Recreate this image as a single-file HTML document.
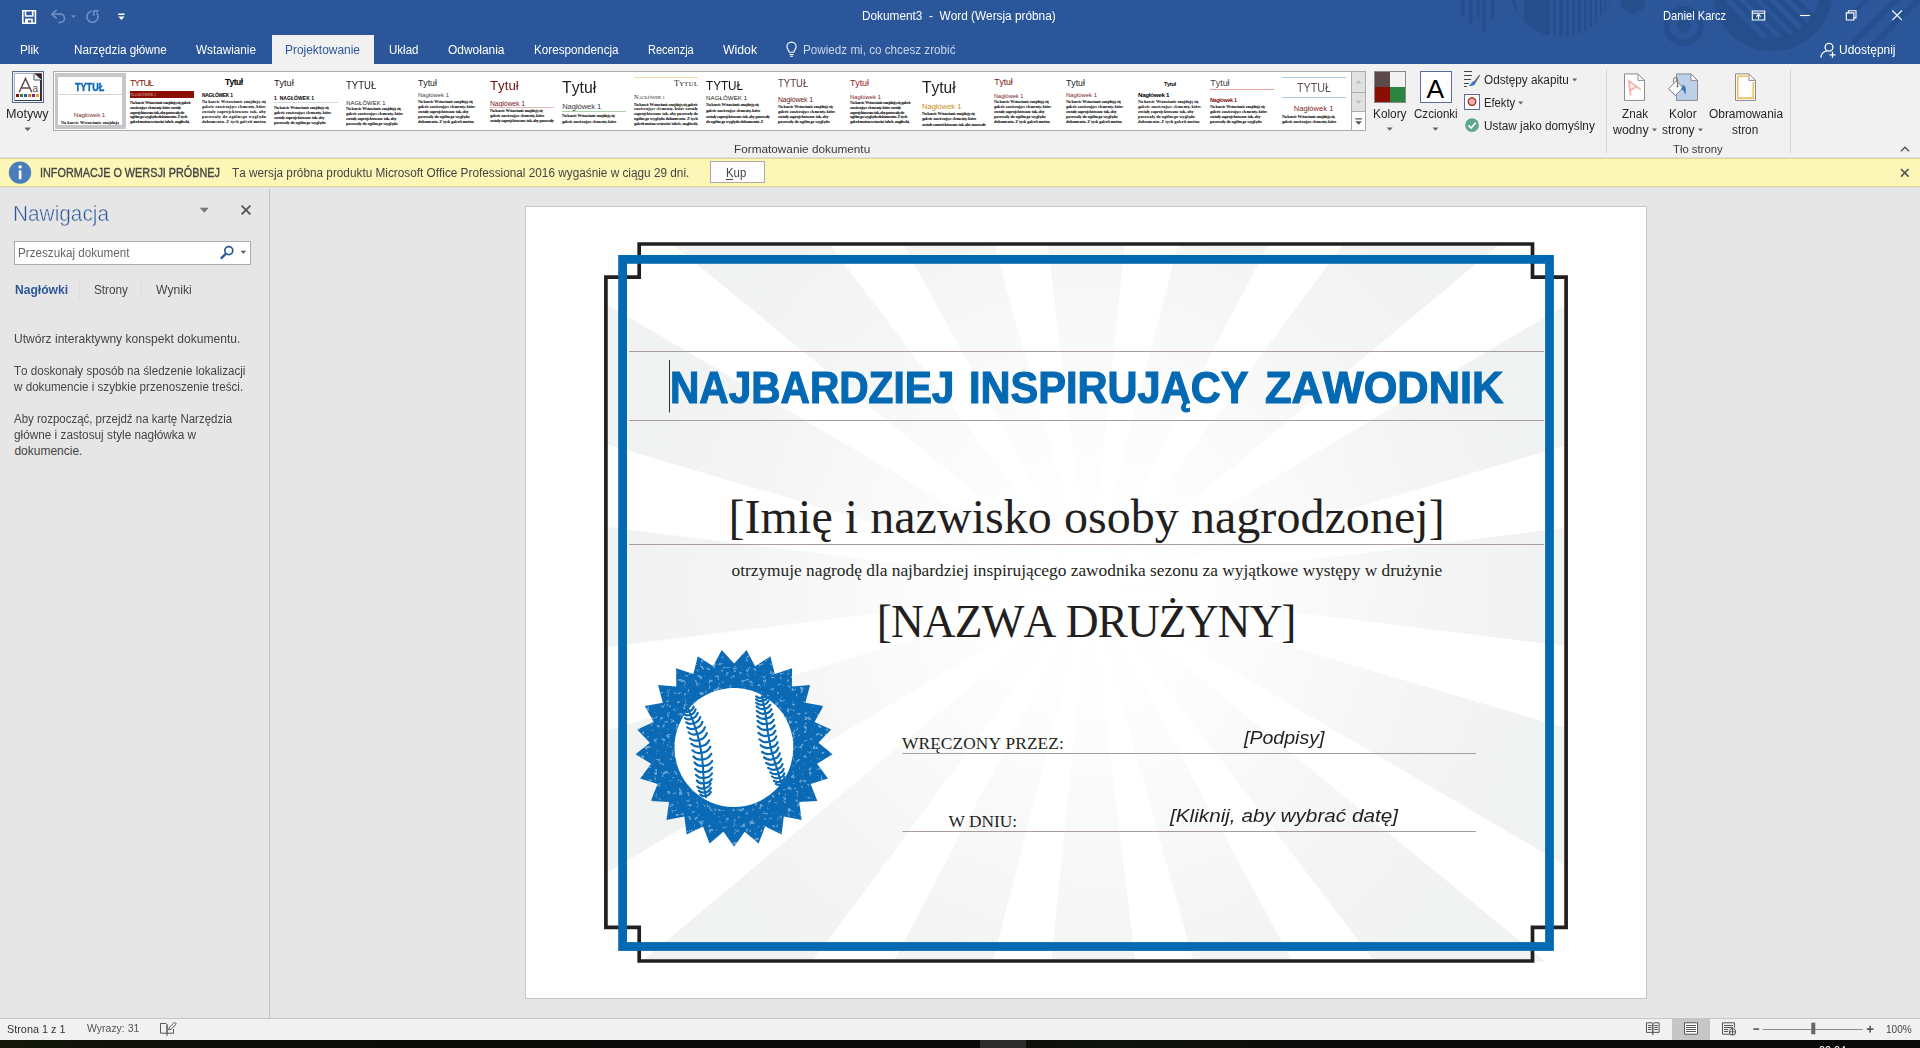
<!DOCTYPE html>
<html lang="pl"><head><meta charset="utf-8"><title>Dokument3 - Word</title>
<style>
html,body{margin:0;padding:0}
body{width:1920px;height:1048px;position:relative;overflow:hidden;background:#e6e6e6;font-family:"Liberation Sans",sans-serif;font-size:12px;color:#262626;font-kerning:none}
.t{position:absolute;white-space:pre;line-height:1;transform-origin:0 0}
.a{position:absolute}
svg{position:absolute;overflow:visible}
</style></head>
<body>
<header id="titlebar">
<div class="a" style="left:0px;top:0px;width:1920px;height:64px;background:#2b579a;"></div>
<svg style="left:1440px;top:0" width="480" height="64" viewBox="1440 0 480 64"><defs><clipPath id="tb"><rect x="1440" y="0" width="480" height="64"/></clipPath><clipPath id="c1"><circle cx="1561" cy="-14" r="51"/></clipPath><clipPath id="c2"><circle cx="1772.500" cy="-9" r="47"/></clipPath></defs><g clip-path="url(#tb)"><g fill="#254e8d">
<rect x="1461" y="0" width="4" height="16"/><rect x="1469" y="0" width="3.500" height="24"/><rect x="1476" y="0" width="4" height="17"/><rect x="1482.500" y="0" width="3.500" height="32"/><rect x="1491" y="0" width="3" height="20"/>
<g clip-path="url(#c1)"><rect x="1524" y="0" width="26" height="40"/><path d="M1510 0h6c0 12 5 22 14 30l-3 4c-10-8-17-20-17-34z"/><path d="M1553 0h3v40h-3zM1559 0h4v40h-4zM1566 0h3v40h-3zM1572 0h3v40h-3zM1578 0h3v40h-3zM1584 0h2.500v40h-2.500zM1589.500 0h2.500v40h-2.500zM1595 0h2.500v40h-2.500zM1600 0h2v40h-2zM1604.500 0h2v40h-2zM1608.500 0h2v40h-2z"/></g>
<circle cx="1632.500" cy="1" r="12.500"/>
<circle cx="1683.750" cy="26" r="7"/>
<g clip-path="url(#c2)"><path d="M1716 0l4-4 62 62-4 4zM1727-4l4-4 62 62-4 4zM1738-8l4-4 62 62-4 4zM1749-12l4-4 62 62-4 4zM1760-16l4-4 62 62-4 4zM1771-20l4-4 62 62-4 4z"/></g>
<path d="M1843 20l22-22h6l-25 25zM1850 43l45-45h7l-48 48zM1868 46l48-48h4v4l-48 48z"/>
</g><circle cx="1683.750" cy="26" r="17" fill="none" stroke="#254e8d" stroke-width="6"/><circle cx="1772.500" cy="-9" r="53.500" fill="none" stroke="#254e8d" stroke-width="13"/></g></svg>
<svg style="left:0;top:0" width="140" height="32" viewBox="0 0 140 32">
<g fill="none" stroke="#fff" stroke-width="1.6"><path d="M22.8 10.8h12.6v12.4H22.8z"/><path d="M25.5 11v5h7.2v-5"/><path d="M26 23v-3.6h6v3.6" /></g><rect x="25.5" y="19.4" width="2.6" height="3.6" fill="#fff"/>
<g fill="none" stroke="#6f8dc4" stroke-width="1.7" stroke-linecap="round" stroke-linejoin="round"><path d="M56.200 10.300l-4.400 3.900 4.400 3.900"/><path d="M52.200 14.200h8.200a4.100 4.100 0 0 1 0 8.200h-1.200"/>
<path d="M98.800 10.800h-5v4.900" stroke-linecap="butt"/><path d="M91.05 11.24A5.6 5.6 0 1 0 96.91 13.20"/></g>
<path d="M71 15.2h5l-2.5 2.8z" fill="#6f8dc4"/>
<path d="M118.2 13.6h6.4v1.3h-6.4zM118.2 16.6h6.4l-3.2 3.4z" fill="#fff"/>
</svg>
<span class="t" style="left:862.30px;top:9.75px;font-size:12px;color:#fff;transform:scaleX(0.9846);">Dokument3  -  Word (Wersja próbna)</span>
<span class="t" style="left:1662.50px;top:10.00px;font-size:12px;color:#fff;transform:scaleX(0.9290);">Daniel Karcz</span>
<svg style="left:1740px;top:0" width="180" height="32" viewBox="1740 0 180 32"><g fill="none" stroke="#fff" stroke-width="1.1">
<path d="M1752.3 11h12.4v9h-12.4zM1752.3 13.3h12.4"/><path d="M1758.5 19v-4.4M1756.3 16.6l2.2-2.2 2.2 2.2"/>
<path d="M1800 15.5h10"/>
<path d="M1846.3 12.9h7.6v7.1h-7.6z"/><path d="M1848.4 12.9v-2.1h7.6v7.1h-2.1"/>
<path d="M1892.3 10.5l9.6 9.6M1901.9 10.5l-9.6 9.6"/></g></svg>
</header>
<nav id="ribbon-tabs">
<div class="a" style="left:272px;top:35px;width:102px;height:30px;background:#f1f1f1;"></div>
<span class="t" style="left:20.00px;top:44.00px;font-size:12px;color:#fff;transform:scaleX(0.9822);">Plik</span>
<span class="t" style="left:74.30px;top:44.00px;font-size:12px;color:#fff;transform:scaleX(0.9718);">Narzędzia główne</span>
<span class="t" style="left:196.30px;top:44.00px;font-size:12px;color:#fff;transform:scaleX(0.9778);">Wstawianie</span>
<span class="t" style="left:285.30px;top:44.00px;font-size:12px;color:#2b579a;transform:scaleX(0.9950);">Projektowanie</span>
<span class="t" style="left:389.30px;top:44.00px;font-size:12px;color:#fff;transform:scaleX(0.9613);">Układ</span>
<span class="t" style="left:448.20px;top:44.00px;font-size:12px;color:#fff;transform:scaleX(0.9964);">Odwołania</span>
<span class="t" style="left:534.20px;top:44.00px;font-size:12px;color:#fff;transform:scaleX(0.9754);">Korespondencja</span>
<span class="t" style="left:648.00px;top:44.00px;font-size:12px;color:#fff;transform:scaleX(0.9134);">Recenzja</span>
<span class="t" style="left:723.00px;top:44.00px;font-size:12px;color:#fff;transform:scaleX(1.0197);">Widok</span>
<svg style="left:784px;top:40px" width="16" height="18" viewBox="784 40 16 18"><g fill="none" stroke="#fff" stroke-width="1.1"><path d="M789.2 52.3c0-2-2.3-2.9-2.3-5.6a4.6 4.6 0 0 1 9.2 0c0 2.7-2.3 3.600-2.300 5.600z"/><path d="M789.400 54.500h4.200M790 56.300h3"/></g></svg>
<span class="t" style="left:803.20px;top:44.00px;font-size:12px;color:#cbd6ea;transform:scaleX(0.9730);">Powiedz mi, co chcesz zrobić</span>
<svg style="left:1818px;top:40px" width="20" height="20" viewBox="1818 40 20 20"><g fill="none" stroke="#fff" stroke-width="1.3"><circle cx="1829" cy="47.300" r="3.900"/><path d="M1821 57.500c.4-4.200 3.200-6.300 5.800-6.400"/><path d="M1832.500 51.800v6M1829.500 54.800h6"/></g></svg>
<span class="t" style="left:1839.30px;top:43.75px;font-size:12px;color:#fff;transform:scaleX(0.9964);">Udostępnij</span>
</nav>
<section id="ribbon">
<div class="a" style="left:0px;top:64px;width:1920px;height:94px;background:#f1f1f1;"></div>
<div class="a" style="left:0px;top:157px;width:1920px;height:1px;background:#dfdfe3;"></div>
<svg style="left:10px;top:69px" width="38" height="38" viewBox="10 69 38 38">
<rect x="12.500" y="71.500" width="31" height="31" fill="#f1f1f1" stroke="#5b6b8f"/>
<path d="M14.500 73.500h19.500v6.500h6.500v20.500h-26z" fill="#fff" stroke="#9fb0c8"/>
<path d="M14.500 100.500h26.500" stroke="#2e4258" fill="none"/><path d="M41 80v21" stroke="#2a2024" stroke-width="1.800" fill="none"/>
<path d="M34 73.200h7.900v7z" fill="#3a2426"/><path d="M34 73.500v6.500h6.500" fill="none" stroke="#6a7c98"/>
<g fill="none" stroke="#5d4a4a" stroke-width="1.500"><path d="M19.200 92.300l6.300-13.800 6.300 13.800M21.400 88h8.200"/></g>
<rect x="16" y="94" width="3" height="3" fill="#8b0e04"/><rect x="20" y="94" width="3" height="3" fill="#2b8541"/><rect x="24" y="94" width="3" height="3" fill="#0b6ab7"/><rect x="28" y="94" width="3" height="3" fill="#e8701a"/><rect x="32" y="94" width="3" height="3" fill="#6a2c91"/><rect x="36" y="94" width="3" height="3" fill="#f0a020"/>
<path d="M24.800 128h5.400l-2.700 3z" fill="#666" transform="translate(0,0)"/>
</svg>
<span class="t" style="left:32.50px;top:84.30px;font-size:10px;color:#5d4a4a;">a</span>
<span class="t" style="left:6.30px;top:107.80px;font-size:12px;color:#262626;transform:scaleX(1.0474);">Motywy</span>
<svg style="left:22px;top:126px" width="12" height="6" viewBox="0 0 12 6"><path d="M2.800 1.500h6l-3 3.200z" fill="#666"/></svg>
<div class="a" style="left:53px;top:71px;width:1313px;height:60px;background:#fff;box-sizing:border-box;border:1px solid #ababab;"></div>
<div class="a" style="left:55px;top:73px;width:71px;height:56px;background:#c6c6c6;"></div>
<div class="a" style="left:58px;top:77px;width:64px;height:48px;background:#fff;"></div>
<span class="t" style="left:75.40px;top:81.50px;font-size:11px;color:#0b6ab7;font-weight:700;transform:scaleX(0.8264);-webkit-text-stroke:0.450px #0b6ab7;">TYTUŁ</span>
<div class="a" style="left:58px;top:94px;width:64px;height:1px;background:#d9d3d3;"></div>
<span class="t" style="left:73.80px;top:112.00px;font-size:6.2px;color:#7b2d2d;letter-spacing:-0.105px;">Nagłówek 1</span>
<span class="t" style="left:61.00px;top:120.60px;font-size:4.3px;color:#000;font-weight:700;font-family:'Liberation Serif',serif;letter-spacing:0.012px;">Na karcie Wstawianie znajdują</span>
<span class="t" style="left:130.00px;top:78.80px;font-size:9px;color:#8b1a10;letter-spacing:-1.204px;">TYTUŁ</span>
<div class="a" style="left:130px;top:91px;width:64px;height:7px;background:#8b0e04;"></div>
<span class="t" style="left:130.50px;top:93.30px;font-size:4px;color:#e6bdb8;font-family:'Liberation Serif',serif;letter-spacing:-0.068px;">NAGŁÓWEK 1</span>
<span class="t" style="left:130.00px;top:100.60px;font-size:4.3px;color:#000;font-weight:700;font-family:'Liberation Serif',serif;letter-spacing:-0.395px;">Na karcie Wstawianie znajdują się galerie</span>
<span class="t" style="left:130.00px;top:105.55px;font-size:4.3px;color:#000;font-weight:700;font-family:'Liberation Serif',serif;letter-spacing:-0.403px;">zawierające elementy, które zostały</span>
<span class="t" style="left:130.00px;top:110.50px;font-size:4.3px;color:#000;font-weight:700;font-family:'Liberation Serif',serif;letter-spacing:-0.426px;">zaprojektowane tak, aby pasowały do</span>
<span class="t" style="left:130.00px;top:115.45px;font-size:4.3px;color:#000;font-weight:700;font-family:'Liberation Serif',serif;letter-spacing:-0.345px;">ogólnego wyglądu dokumentu. Z tych</span>
<span class="t" style="left:130.00px;top:120.40px;font-size:4.3px;color:#000;font-weight:700;font-family:'Liberation Serif',serif;letter-spacing:-0.385px;">galerii można wstawiać tabele, nagłówki,</span>
<span class="t" style="left:225.00px;top:77.90px;font-size:8.5px;color:#000;font-weight:700;letter-spacing:-0.578px;">Tytuł</span>
<span class="t" style="left:202.00px;top:92.80px;font-size:5px;color:#000;font-weight:700;letter-spacing:-0.321px;">NAGŁÓWEK 1</span>
<span class="t" style="left:202.00px;top:99.80px;font-size:4.3px;color:#000;font-weight:700;font-family:'Liberation Serif',serif;letter-spacing:0.016px;">Na karcie Wstawianie znajdują się</span>
<span class="t" style="left:202.00px;top:104.75px;font-size:4.3px;color:#000;font-weight:700;font-family:'Liberation Serif',serif;letter-spacing:-0.020px;">galerie zawierające elementy, które</span>
<span class="t" style="left:202.00px;top:109.70px;font-size:4.3px;color:#000;font-weight:700;font-family:'Liberation Serif',serif;letter-spacing:0.168px;">zostały zaprojektowane tak, aby</span>
<span class="t" style="left:202.00px;top:114.65px;font-size:4.3px;color:#000;font-weight:700;font-family:'Liberation Serif',serif;letter-spacing:0.279px;">pasowały do ogólnego wyglądu</span>
<span class="t" style="left:202.00px;top:119.60px;font-size:4.3px;color:#000;font-weight:700;font-family:'Liberation Serif',serif;letter-spacing:0.100px;">dokumentu. Z tych galerii można</span>
<span class="t" style="left:274.00px;top:79.00px;font-size:9.2px;color:#222;letter-spacing:-0.055px;">Tytuł</span>
<span class="t" style="left:274.00px;top:96.30px;font-size:5px;color:#000;font-weight:700;letter-spacing:0.046px;">1  NAGŁÓWEK 1</span>
<div class="a" style="left:274px;top:102px;width:64px;height:1px;background:#d6d6d6;"></div>
<span class="t" style="left:274.00px;top:106.30px;font-size:4.3px;color:#000;font-weight:700;font-family:'Liberation Serif',serif;letter-spacing:-0.266px;">Na karcie Wstawianie znajdują się</span>
<span class="t" style="left:274.00px;top:111.30px;font-size:4.3px;color:#000;font-weight:700;font-family:'Liberation Serif',serif;letter-spacing:-0.211px;">galerie zawierające elementy, które</span>
<span class="t" style="left:274.00px;top:116.30px;font-size:4.3px;color:#000;font-weight:700;font-family:'Liberation Serif',serif;letter-spacing:-0.279px;">zostały zaprojektowane tak, aby</span>
<span class="t" style="left:274.00px;top:121.30px;font-size:4.3px;color:#000;font-weight:700;font-family:'Liberation Serif',serif;letter-spacing:-0.180px;">pasowały do ogólnego wyglądu</span>
<span class="t" style="left:346.30px;top:79.60px;font-size:11.2px;color:#222;transform:scaleX(0.8522);">TYTUŁ</span>
<span class="t" style="left:346.20px;top:100.50px;font-size:5.8px;color:#222;letter-spacing:0.117px;">NAGŁÓWEK 1</span>
<span class="t" style="left:346.00px;top:106.90px;font-size:4.3px;color:#000;font-weight:700;font-family:'Liberation Serif',serif;letter-spacing:-0.266px;">Na karcie Wstawianie znajdują się</span>
<span class="t" style="left:346.00px;top:111.95px;font-size:4.3px;color:#000;font-weight:700;font-family:'Liberation Serif',serif;letter-spacing:-0.211px;">galerie zawierające elementy, które</span>
<span class="t" style="left:346.00px;top:117.00px;font-size:4.3px;color:#000;font-weight:700;font-family:'Liberation Serif',serif;letter-spacing:-0.279px;">zostały zaprojektowane tak, aby</span>
<div class="a" style="left:346px;top:122px;width:60px;height:3.500px;overflow:hidden"><span class="t" style="left:0.00px;top:0.00px;font-size:4.3px;color:#000;font-weight:700;font-family:'Liberation Serif',serif;letter-spacing:-0.180px;">pasowały do ogólnego wyglądu</span></div>
<span class="t" style="left:418.00px;top:79.00px;font-size:8.8px;color:#222;letter-spacing:-0.045px;">Tytuł</span>
<span class="t" style="left:418.00px;top:93.40px;font-size:5.8px;color:#444;letter-spacing:0.078px;">Nagłówek 1</span>
<span class="t" style="left:418.00px;top:100.00px;font-size:4.3px;color:#000;font-weight:700;font-family:'Liberation Serif',serif;letter-spacing:-0.266px;">Na karcie Wstawianie znajdują się</span>
<span class="t" style="left:418.00px;top:105.10px;font-size:4.3px;color:#000;font-weight:700;font-family:'Liberation Serif',serif;letter-spacing:-0.211px;">galerie zawierające elementy, które</span>
<span class="t" style="left:418.00px;top:110.20px;font-size:4.3px;color:#000;font-weight:700;font-family:'Liberation Serif',serif;letter-spacing:-0.279px;">zostały zaprojektowane tak, aby</span>
<span class="t" style="left:418.00px;top:115.30px;font-size:4.3px;color:#000;font-weight:700;font-family:'Liberation Serif',serif;letter-spacing:-0.180px;">pasowały do ogólnego wyglądu</span>
<span class="t" style="left:418.00px;top:120.40px;font-size:4.3px;color:#000;font-weight:700;font-family:'Liberation Serif',serif;letter-spacing:-0.170px;">dokumentu. Z tych galerii można</span>
<span class="t" style="left:490.00px;top:79.00px;font-size:13.6px;color:#6e1414;transform:scaleX(0.9739);">Tytuł</span>
<span class="t" style="left:490.00px;top:100.80px;font-size:6.8px;color:#7a1a1a;letter-spacing:-0.057px;">Nagłówek 1</span>
<div class="a" style="left:490px;top:107px;width:64px;height:1px;background:#e8b9b5;"></div>
<span class="t" style="left:490.00px;top:109.40px;font-size:4.3px;color:#000;font-weight:700;font-family:'Liberation Serif',serif;letter-spacing:-0.331px;">Na karcie Wstawianie znajdują się</span>
<span class="t" style="left:490.00px;top:114.40px;font-size:4.3px;color:#000;font-weight:700;font-family:'Liberation Serif',serif;letter-spacing:-0.292px;">galerie zawierające elementy, które</span>
<span class="t" style="left:490.00px;top:119.40px;font-size:4.3px;color:#000;font-weight:700;font-family:'Liberation Serif',serif;letter-spacing:-0.333px;">zostały zaprojektowane tak, aby pasowały</span>
<span class="t" style="left:562.30px;top:79.80px;font-size:16px;color:#222;transform:scaleX(0.9893);">Tytuł</span>
<span class="t" style="left:562.20px;top:103.30px;font-size:7.6px;color:#3a3a3a;letter-spacing:-0.076px;">Nagłówek 1</span>
<div class="a" style="left:562px;top:111px;width:64px;height:1px;background:#a9d1a9;"></div>
<span class="t" style="left:562.00px;top:113.80px;font-size:4.3px;color:#000;font-weight:700;font-family:'Liberation Serif',serif;letter-spacing:-0.331px;">Na karcie Wstawianie znajdują się</span>
<span class="t" style="left:562.00px;top:119.60px;font-size:4.3px;color:#000;font-weight:700;font-family:'Liberation Serif',serif;letter-spacing:-0.292px;">galerie zawierające elementy, które</span>
<div class="a" style="left:634px;top:77px;width:64px;height:1px;background:#f8dca8;"></div>
<span class="t" style="left:674.00px;top:78.80px;font-size:8.6px;color:#222;font-family:'Liberation Serif',serif;">T</span>
<span class="t" style="left:679.20px;top:80.80px;font-size:6.6px;color:#222;font-family:'Liberation Serif',serif;letter-spacing:0.402px;">YTUŁ</span>
<span class="t" style="left:634.00px;top:93.60px;font-size:6px;color:#222;font-family:'Liberation Serif',serif;">N</span>
<span class="t" style="left:638.40px;top:95.60px;font-size:4.6px;color:#222;font-family:'Liberation Serif',serif;letter-spacing:-0.034px;">AGŁÓWEK 1</span>
<span class="t" style="left:634.00px;top:102.50px;font-size:4.3px;color:#000;font-weight:700;font-family:'Liberation Serif',serif;letter-spacing:-0.325px;">Na karcie Wstawianie znajdują się galerie</span>
<span class="t" style="left:634.00px;top:107.47px;font-size:4.3px;color:#000;font-weight:700;font-family:'Liberation Serif',serif;letter-spacing:-0.027px;">zawierające elementy, które zostały</span>
<span class="t" style="left:634.00px;top:112.44px;font-size:4.3px;color:#000;font-weight:700;font-family:'Liberation Serif',serif;letter-spacing:-0.143px;">zaprojektowane tak, aby pasowały do</span>
<span class="t" style="left:634.00px;top:117.41px;font-size:4.3px;color:#000;font-weight:700;font-family:'Liberation Serif',serif;letter-spacing:-0.148px;">ogólnego wyglądu dokumentu. Z tych</span>
<span class="t" style="left:634.00px;top:122.38px;font-size:4.3px;color:#000;font-weight:700;font-family:'Liberation Serif',serif;letter-spacing:-0.275px;">galerii można wstawiać tabele, nagłówki,</span>
<span class="t" style="left:706.00px;top:79.50px;font-size:12.4px;color:#111;transform:scaleX(0.9427);">TYTUŁ</span>
<span class="t" style="left:706.00px;top:94.90px;font-size:6.1px;color:#222;letter-spacing:0.100px;">NAGŁÓWEK 1</span>
<span class="t" style="left:706.00px;top:102.90px;font-size:4.3px;color:#000;font-weight:700;font-family:'Liberation Serif',serif;letter-spacing:-0.331px;">Na karcie Wstawianie znajdują się</span>
<span class="t" style="left:706.00px;top:108.73px;font-size:4.3px;color:#000;font-weight:700;font-family:'Liberation Serif',serif;letter-spacing:-0.292px;">galerie zawierające elementy, które</span>
<span class="t" style="left:706.00px;top:114.56px;font-size:4.3px;color:#000;font-weight:700;font-family:'Liberation Serif',serif;letter-spacing:-0.333px;">zostały zaprojektowane tak, aby pasowały</span>
<span class="t" style="left:706.00px;top:120.39px;font-size:4.3px;color:#000;font-weight:700;font-family:'Liberation Serif',serif;letter-spacing:-0.260px;">do ogólnego wyglądu dokumentu. Z</span>
<span class="t" style="left:778.30px;top:77.80px;font-size:11px;color:#5a3535;transform:scaleX(0.8667);">TYTUŁ</span>
<span class="t" style="left:778.00px;top:97.00px;font-size:6.9px;color:#6b2020;letter-spacing:-0.113px;">Nagłówek 1</span>
<span class="t" style="left:778.00px;top:104.80px;font-size:4.3px;color:#000;font-weight:700;font-family:'Liberation Serif',serif;letter-spacing:-0.266px;">Na karcie Wstawianie znajdują się</span>
<span class="t" style="left:778.00px;top:109.90px;font-size:4.3px;color:#000;font-weight:700;font-family:'Liberation Serif',serif;letter-spacing:-0.211px;">galerie zawierające elementy, które</span>
<span class="t" style="left:778.00px;top:115.00px;font-size:4.3px;color:#000;font-weight:700;font-family:'Liberation Serif',serif;letter-spacing:-0.279px;">zostały zaprojektowane tak, aby</span>
<span class="t" style="left:778.00px;top:120.10px;font-size:4.3px;color:#000;font-weight:700;font-family:'Liberation Serif',serif;letter-spacing:-0.180px;">pasowały do ogólnego wyglądu</span>
<span class="t" style="left:850.00px;top:79.00px;font-size:9px;color:#9b1c1c;letter-spacing:-0.129px;">Tytuł</span>
<span class="t" style="left:850.00px;top:94.60px;font-size:5.8px;color:#7a1a1a;letter-spacing:0.078px;">Nagłówek 1</span>
<span class="t" style="left:850.00px;top:100.60px;font-size:4.3px;color:#000;font-weight:700;font-family:'Liberation Serif',serif;letter-spacing:-0.395px;">Na karcie Wstawianie znajdują się galerie</span>
<span class="t" style="left:850.00px;top:105.55px;font-size:4.3px;color:#000;font-weight:700;font-family:'Liberation Serif',serif;letter-spacing:-0.403px;">zawierające elementy, które zostały</span>
<span class="t" style="left:850.00px;top:110.50px;font-size:4.3px;color:#000;font-weight:700;font-family:'Liberation Serif',serif;letter-spacing:-0.426px;">zaprojektowane tak, aby pasowały do</span>
<span class="t" style="left:850.00px;top:115.45px;font-size:4.3px;color:#000;font-weight:700;font-family:'Liberation Serif',serif;letter-spacing:-0.345px;">ogólnego wyglądu dokumentu. Z tych</span>
<span class="t" style="left:850.00px;top:120.40px;font-size:4.3px;color:#000;font-weight:700;font-family:'Liberation Serif',serif;letter-spacing:-0.385px;">galerii można wstawiać tabele, nagłówki,</span>
<span class="t" style="left:922.00px;top:79.80px;font-size:16px;color:#222;transform:scaleX(0.9720);">Tytuł</span>
<span class="t" style="left:922.00px;top:103.30px;font-size:7.6px;color:#c8901e;letter-spacing:-0.032px;">Nagłówek 1</span>
<span class="t" style="left:922.00px;top:111.90px;font-size:4.3px;color:#000;font-weight:700;font-family:'Liberation Serif',serif;letter-spacing:-0.331px;">Na karcie Wstawianie znajdują się</span>
<span class="t" style="left:922.00px;top:117.45px;font-size:4.3px;color:#000;font-weight:700;font-family:'Liberation Serif',serif;letter-spacing:-0.292px;">galerie zawierające elementy, które</span>
<div class="a" style="left:922px;top:123px;width:66px;height:2.500px;overflow:hidden"><span class="t" style="left:0.00px;top:0.00px;font-size:4.3px;color:#000;font-weight:700;font-family:'Liberation Serif',serif;letter-spacing:-0.333px;">zostały zaprojektowane tak, aby pasowały</span></div>
<span class="t" style="left:994.30px;top:78.00px;font-size:8.8px;color:#7a1515;letter-spacing:-0.170px;">Tytuł</span>
<span class="t" style="left:994.00px;top:94.00px;font-size:5.6px;color:#7a1a1a;letter-spacing:0.007px;">Nagłówek 1</span>
<span class="t" style="left:994.00px;top:99.80px;font-size:4.3px;color:#000;font-weight:700;font-family:'Liberation Serif',serif;letter-spacing:-0.266px;">Na karcie Wstawianie znajdują się</span>
<span class="t" style="left:994.00px;top:104.80px;font-size:4.3px;color:#000;font-weight:700;font-family:'Liberation Serif',serif;letter-spacing:-0.211px;">galerie zawierające elementy, które</span>
<span class="t" style="left:994.00px;top:109.80px;font-size:4.3px;color:#000;font-weight:700;font-family:'Liberation Serif',serif;letter-spacing:-0.279px;">zostały zaprojektowane tak, aby</span>
<span class="t" style="left:994.00px;top:114.80px;font-size:4.3px;color:#000;font-weight:700;font-family:'Liberation Serif',serif;letter-spacing:-0.180px;">pasowały do ogólnego wyglądu</span>
<span class="t" style="left:994.00px;top:119.80px;font-size:4.3px;color:#000;font-weight:700;font-family:'Liberation Serif',serif;letter-spacing:-0.170px;">dokumentu. Z tych galerii można</span>
<span class="t" style="left:1066.00px;top:78.80px;font-size:8.8px;color:#222;letter-spacing:-0.045px;">Tytuł</span>
<span class="t" style="left:1066.00px;top:93.40px;font-size:5.8px;color:#7a1a1a;letter-spacing:0.078px;">Nagłówek 1</span>
<span class="t" style="left:1066.00px;top:100.00px;font-size:4.3px;color:#000;font-weight:700;font-family:'Liberation Serif',serif;letter-spacing:-0.266px;">Na karcie Wstawianie znajdują się</span>
<span class="t" style="left:1066.00px;top:105.10px;font-size:4.3px;color:#000;font-weight:700;font-family:'Liberation Serif',serif;letter-spacing:-0.211px;">galerie zawierające elementy, które</span>
<span class="t" style="left:1066.00px;top:110.20px;font-size:4.3px;color:#000;font-weight:700;font-family:'Liberation Serif',serif;letter-spacing:-0.279px;">zostały zaprojektowane tak, aby</span>
<span class="t" style="left:1066.00px;top:115.30px;font-size:4.3px;color:#000;font-weight:700;font-family:'Liberation Serif',serif;letter-spacing:-0.180px;">pasowały do ogólnego wyglądu</span>
<span class="t" style="left:1066.00px;top:120.40px;font-size:4.3px;color:#000;font-weight:700;font-family:'Liberation Serif',serif;letter-spacing:-0.170px;">dokumentu. Z tych galerii można</span>
<span class="t" style="left:1164.00px;top:82.00px;font-size:5.4px;color:#000;font-weight:700;letter-spacing:-0.223px;">Tytuł</span>
<span class="t" style="left:1138.00px;top:91.80px;font-size:6.2px;color:#000;font-weight:700;letter-spacing:-0.294px;">Nagłówek 1</span>
<span class="t" style="left:1138.00px;top:100.00px;font-size:4.3px;color:#000;font-weight:700;font-family:'Liberation Serif',serif;letter-spacing:-0.094px;">Na karcie Wstawianie znajdują się</span>
<span class="t" style="left:1138.00px;top:105.10px;font-size:4.3px;color:#000;font-weight:700;font-family:'Liberation Serif',serif;letter-spacing:-0.042px;">galerie zawierające elementy, które</span>
<span class="t" style="left:1138.00px;top:110.20px;font-size:4.3px;color:#000;font-weight:700;font-family:'Liberation Serif',serif;letter-spacing:-0.110px;">zostały zaprojektowane tak, aby</span>
<span class="t" style="left:1138.00px;top:115.30px;font-size:4.3px;color:#000;font-weight:700;font-family:'Liberation Serif',serif;letter-spacing:0.011px;">pasowały do ogólnego wyglądu</span>
<span class="t" style="left:1138.00px;top:120.40px;font-size:4.3px;color:#000;font-weight:700;font-family:'Liberation Serif',serif;letter-spacing:0.016px;">dokumentu. Z tych galerii można</span>
<span class="t" style="left:1210.30px;top:78.50px;font-size:9px;color:#444;letter-spacing:-0.054px;">Tytuł</span>
<div class="a" style="left:1210px;top:89px;width:64px;height:1px;background:#e5a0a0;"></div>
<span class="t" style="left:1210.00px;top:97.80px;font-size:5.4px;color:#7a0e0e;font-weight:700;letter-spacing:-0.297px;">Nagłówek 1</span>
<span class="t" style="left:1210.00px;top:104.80px;font-size:4.3px;color:#000;font-weight:700;font-family:'Liberation Serif',serif;letter-spacing:-0.266px;">Na karcie Wstawianie znajdują się</span>
<span class="t" style="left:1210.00px;top:109.90px;font-size:4.3px;color:#000;font-weight:700;font-family:'Liberation Serif',serif;letter-spacing:-0.211px;">galerie zawierające elementy, które</span>
<span class="t" style="left:1210.00px;top:115.00px;font-size:4.3px;color:#000;font-weight:700;font-family:'Liberation Serif',serif;letter-spacing:-0.279px;">zostały zaprojektowane tak, aby</span>
<span class="t" style="left:1210.00px;top:120.10px;font-size:4.3px;color:#000;font-weight:700;font-family:'Liberation Serif',serif;letter-spacing:-0.180px;">pasowały do ogólnego wyglądu</span>
<div class="a" style="left:1282px;top:77px;width:64px;height:1px;background:#a9cce8;"></div>
<div class="a" style="left:1282px;top:97px;width:64px;height:1px;background:#a9cce8;"></div>
<span class="t" style="left:1296.50px;top:81.80px;font-size:12px;color:#5e5050;transform:scaleX(0.8944);">TYTUŁ</span>
<span class="t" style="left:1293.80px;top:105.40px;font-size:7.6px;color:#7b2d2d;letter-spacing:-0.010px;">Nagłówek 1</span>
<span class="t" style="left:1282.00px;top:114.80px;font-size:4.3px;color:#000;font-weight:700;font-family:'Liberation Serif',serif;letter-spacing:-0.331px;">Na karcie Wstawianie znajdują się</span>
<span class="t" style="left:1282.00px;top:120.30px;font-size:4.3px;color:#000;font-weight:700;font-family:'Liberation Serif',serif;letter-spacing:-0.292px;">galerie zawierające elementy, które</span>
<div class="a" style="left:1351px;top:72px;width:1px;height:58px;background:#ababab;"></div>
<div class="a" style="left:1352px;top:72px;width:13px;height:20px;background:#e1e1e1;"></div>
<div class="a" style="left:1352px;top:92px;width:13px;height:1px;background:#ababab;"></div>
<div class="a" style="left:1352px;top:93px;width:13px;height:18px;background:#e1e1e1;"></div>
<div class="a" style="left:1352px;top:111px;width:13px;height:1px;background:#ababab;"></div>
<svg style="left:1352px;top:72px" width="13" height="58" viewBox="1352 72 13 58"><path d="M1355.600 83.500h6l-3-3.400z" fill="#c0c0c0"/><path d="M1355.600 100.500h6l-3 3.400z" fill="#c0c0c0"/><path d="M1355.300 118.300h6.600v1.100h-6.600zM1355.300 121.300h6.600l-3.300 3.400z" fill="#555"/></svg>
<svg style="left:1373px;top:70px" width="34" height="34" viewBox="1373 70 34 34"><rect x="1374.500" y="71.500" width="31" height="31" fill="#f2f2f2" stroke="#8a8a8a"/><rect x="1375" y="72" width="15" height="15" fill="#5a4a4a"/><rect x="1375" y="87" width="15" height="15" fill="#8b0e04"/><rect x="1390" y="87" width="15" height="15" fill="#2b8541"/></svg>
<span class="t" style="left:1373.40px;top:107.80px;font-size:12px;color:#262626;transform:scaleX(0.9848);">Kolory</span>
<svg style="left:1384px;top:126px" width="12" height="6" viewBox="0 0 12 6"><path d="M2.700 1.600h6l-3 3.200z" fill="#666"/></svg>
<svg style="left:1419px;top:70px" width="34" height="34" viewBox="1419 70 34 34"><rect x="1420.500" y="71.500" width="31" height="31" fill="#fff" stroke="#5b6b9a"/></svg>
<span class="t" style="left:1426.40px;top:75.50px;font-size:26.5px;color:#000;">A</span>
<span class="t" style="left:1413.80px;top:107.80px;font-size:12px;color:#262626;transform:scaleX(0.9634);">Czcionki</span>
<svg style="left:1430px;top:126px" width="12" height="6" viewBox="0 0 12 6"><path d="M2.500 1.600h6l-3 3.200z" fill="#666"/></svg>
<svg style="left:1463px;top:70px" width="20" height="64" viewBox="1463 70 20 64">
<g stroke="#444" stroke-width="1"><path d="M1464 71.500h8M1464 75.500h8M1464 79.500h7M1464 83.500h5M1464 86.500h3"/></g>
<path d="M1479.600 74.500l-6.200 7.400 1.800 1.500 5-8.200z" fill="#666"/><path d="M1473.600 81.200c-2.200.4-2.200 3.400-5.400 4.400 3.200 1.200 6.600 0 7.400-2.800z" fill="#3b7bc4"/>
<rect x="1464.500" y="94.500" width="15" height="15" fill="#fff" stroke="#5b6b9a"/><circle cx="1472" cy="101.600" r="3.800" fill="#f0b0b0" stroke="#b02020" stroke-width="1.300"/>
<circle cx="1472" cy="125.200" r="6.900" fill="#5fa88c"/><path d="M1468.600 125.400l2.500 2.600 4.600-5.200" fill="none" stroke="#fff" stroke-width="1.700"/>
</svg>
<span class="t" style="left:1483.80px;top:74.00px;font-size:12px;color:#262626;transform:scaleX(0.9779);">Odstępy akapitu</span>
<svg style="left:1571px;top:77px" width="8" height="6" viewBox="0 0 8 6"><path d="M1.200 1.600h5l-2.500 2.800z" fill="#666"/></svg>
<span class="t" style="left:1483.80px;top:97.00px;font-size:12px;color:#262626;transform:scaleX(0.9353);">Efekty</span>
<svg style="left:1517px;top:100px" width="8" height="6" viewBox="0 0 8 6"><path d="M1.200 1.600h5l-2.500 2.800z" fill="#666"/></svg>
<span class="t" style="left:1483.80px;top:120.00px;font-size:12px;color:#262626;transform:scaleX(0.9830);">Ustaw jako domyślny</span>
<div class="a" style="left:1606px;top:69px;width:1px;height:84px;background:#d4d4d4;"></div>
<div class="a" style="left:1790px;top:69px;width:1px;height:84px;background:#d4d4d4;"></div>
<svg style="left:1620px;top:70px" width="140" height="34" viewBox="1620 70 140 34">
<path d="M1624.500 73.900h13.500l6.500 6.500v20h-20z" fill="#fff" stroke="#8a8a8a"/><path d="M1638 73.900v6.500h6.500" fill="none" stroke="#8a8a8a"/>
<g fill="none" stroke="#f4b9ae" stroke-width="2.100"><path d="M1630.600 95.500l-1.600-14.300 11.700 8.300M1629.800 90.500l6.800-3.800"/></g>
<path d="M1676.500 73.900h14.500l6.500 6.500v20h-21z" fill="#bcd0e8" stroke="#8a8a8a"/><path d="M1691 73.900v6.500h6.500z" fill="#fff" stroke="#8a8a8a"/>
<path d="M1668.600 88.800l7.800-7.800 6.700 6.700-7.800 7.800z" fill="#fff" stroke="#777"/><path d="M1673.600 82.500v-3a2 2 0 0 1 4 0v7" fill="none" stroke="#777"/><circle cx="1677.600" cy="86.300" r="1.100" fill="#777"/>
<path d="M1682.800 85c3 .6 4 4 2.500 9.800 -1.200-3.400-2-4.800-4.300-5.600z" fill="#3b7bc4"/>
<path d="M1735.500 73.900h13.500l6.500 6.500v20h-20z" fill="#fff" stroke="#8a8a8a"/><path d="M1749 73.900v6.500h6.500" fill="none" stroke="#8a8a8a"/>
<path d="M1737.700 76.200h10.500M1737.700 76.200v21.900h15.600v-16" fill="none" stroke="#f0c060" stroke-width="1.600"/>
</svg>
<span class="t" style="left:1621.90px;top:107.80px;font-size:12px;color:#262626;transform:scaleX(0.9742);">Znak</span>
<span class="t" style="left:1613.30px;top:124.00px;font-size:12px;color:#262626;transform:scaleX(1.0263);">wodny</span>
<svg style="left:1651px;top:127px" width="8" height="6" viewBox="0 0 8 6"><path d="M1 1.600h5l-2.500 2.800z" fill="#666"/></svg>
<span class="t" style="left:1669.40px;top:107.80px;font-size:12px;color:#262626;transform:scaleX(0.9852);">Kolor</span>
<span class="t" style="left:1662.30px;top:124.00px;font-size:12px;color:#262626;transform:scaleX(0.9943);">strony</span>
<svg style="left:1697px;top:127px" width="8" height="6" viewBox="0 0 8 6"><path d="M1 1.600h5l-2.500 2.800z" fill="#666"/></svg>
<span class="t" style="left:1708.50px;top:107.80px;font-size:12px;color:#262626;transform:scaleX(0.9919);">Obramowania</span>
<span class="t" style="left:1732.30px;top:124.00px;font-size:12px;color:#262626;transform:scaleX(0.9817);">stron</span>
<span class="t" style="left:1673.30px;top:144.00px;font-size:11.5px;color:#3a3a3a;transform:scaleX(0.9822);">Tło strony</span>
<span class="t" style="left:734.30px;top:144.00px;font-size:11.5px;color:#3a3a3a;transform:scaleX(1.0243);">Formatowanie dokumentu</span>
<svg style="left:1899px;top:144px" width="12" height="10" viewBox="0 0 12 10"><path d="M2 7.200l4-4 4 4" fill="none" stroke="#555" stroke-width="1.400"/></svg>
</section>
<section id="trial-bar">
<div class="a" style="left:0px;top:158px;width:1920px;height:28px;background:#fcf7b6;"></div>
<div class="a" style="left:0px;top:158px;width:1920px;height:1px;background:#dad793;"></div>
<div class="a" style="left:0px;top:186px;width:1920px;height:1px;background:#dad793;"></div>
<div class="a" style="left:0px;top:187px;width:1920px;height:1px;background:#e4e4e9;"></div>
<svg style="left:8px;top:161px" width="24" height="24" viewBox="8 161 24 24"><circle cx="20" cy="172.600" r="11.200" fill="#4a7ebb"/><rect x="18.800" y="170.400" width="2.600" height="8.800" fill="#fff"/><circle cx="20.100" cy="166.900" r="1.700" fill="#fff"/></svg>
<span class="t" style="left:40.20px;top:167.00px;font-size:12px;color:#444;transform:scaleX(0.9029);-webkit-text-stroke:0.35px #444;">INFORMACJE O WERSJI PRÓBNEJ</span>
<span class="t" style="left:231.70px;top:167.00px;font-size:12px;color:#444;transform:scaleX(0.9822);">Ta wersja próbna produktu Microsoft Office Professional 2016 wygaśnie w ciągu 29 dni.</span>
<div class="a" style="left:710px;top:161px;width:55px;height:22px;background:#fdfdfd;box-sizing:border-box;border:1px solid #ababab;"></div>
<span class="t" style="left:726.30px;top:167.00px;font-size:12px;color:#444;transform:scaleX(0.9457);">Kup</span>
<div class="a" style="left:726px;top:179px;width:7px;height:1px;background:#444;"></div>
<svg style="left:1899px;top:167px" width="12" height="12" viewBox="0 0 12 12"><path d="M2 2l7.600 7.600M9.600 2l-7.600 7.600" fill="none" stroke="#555" stroke-width="1.700"/></svg>
</section>
<aside id="nav-pane">
<div class="a" style="left:269px;top:189px;width:1px;height:829px;background:#c3c3c3;"></div>
<span class="t" style="left:12.60px;top:202.90px;font-size:22px;color:#2b579a;transform:scaleX(0.9458);-webkit-text-stroke:0.500px #e6e6e6;">Nawigacja</span>
<svg style="left:198px;top:206px" width="12" height="8" viewBox="0 0 12 8"><path d="M1.800 1.800h9l-4.500 5z" fill="#777"/></svg>
<svg style="left:240px;top:204px" width="12" height="12" viewBox="0 0 12 12"><path d="M1.600 1.600l8.800 8.800M10.400 1.600l-8.800 8.800" fill="none" stroke="#555" stroke-width="1.900"/></svg>
<div class="a" style="left:14px;top:241px;width:237px;height:24px;background:#fff;box-sizing:border-box;border:1px solid #ababab;"></div>
<span class="t" style="left:17.50px;top:247.00px;font-size:12px;color:#666;transform:scaleX(0.9718);">Przeszukaj dokument</span>
<svg style="left:218px;top:244px" width="32" height="18" viewBox="218 244 32 18"><circle cx="228.800" cy="250.600" r="4" fill="none" stroke="#2b579a" stroke-width="1.700"/><path d="M226 253.600l-5.200 5" stroke="#2b579a" stroke-width="2.200" fill="none"/><path d="M240.600 250.800h5.600l-2.800 3z" fill="#555"/></svg>
<span class="t" style="left:15.30px;top:283.80px;font-size:12px;color:#2b579a;font-weight:700;transform:scaleX(1.0059);">Nagłówki</span>
<span class="t" style="left:94.00px;top:283.80px;font-size:12px;color:#444;transform:scaleX(0.9802);">Strony</span>
<span class="t" style="left:156.00px;top:283.80px;font-size:12px;color:#444;transform:scaleX(1.0129);">Wyniki</span>
<div class="a" style="left:79px;top:280px;width:1px;height:19px;background:#dcdcdc;"></div>
<div class="a" style="left:141px;top:280px;width:1px;height:19px;background:#dcdcdc;"></div>
<span class="t" style="left:14.40px;top:333.00px;font-size:12px;color:#444;transform:scaleX(1.0073);">Utwórz interaktywny konspekt dokumentu.</span>
<span class="t" style="left:14.40px;top:365.00px;font-size:12px;color:#444;transform:scaleX(0.9690);">To doskonały sposób na śledzenie lokalizacji</span>
<span class="t" style="left:14.40px;top:381.00px;font-size:12px;color:#444;transform:scaleX(0.9707);">w dokumencie i szybkie przenoszenie treści.</span>
<span class="t" style="left:14.40px;top:413.00px;font-size:12px;color:#444;transform:scaleX(0.9561);">Aby rozpocząć, przejdź na kartę Narzędzia</span>
<span class="t" style="left:14.40px;top:429.00px;font-size:12px;color:#444;transform:scaleX(0.9820);">główne i zastosuj style nagłówka w</span>
<span class="t" style="left:14.40px;top:445.00px;font-size:12px;color:#444;">dokumencie.</span>
</aside>
<footer id="status-bar">
<div class="a" style="left:0px;top:1018px;width:1920px;height:1px;background:#c6c6c6;"></div>
<div class="a" style="left:0px;top:1019px;width:1920px;height:21px;background:#f1f1f1;"></div>
<span class="t" style="left:7.30px;top:1023.75px;font-size:11px;color:#333;transform:scaleX(0.9860);">Strona 1 z 1</span>
<span class="t" style="left:87.30px;top:1022.70px;font-size:11px;color:#555;transform:scaleX(0.9506);">Wyrazy: 31</span>
<svg style="left:158px;top:1020px" width="20" height="18" viewBox="158 1020 20 18"><g fill="none" stroke="#555" stroke-width="1"><path d="M160.500 1023.500h5.500l1 1v9.500l-1-.8h-5.500zM167 1034v-9.500M173.500 1029v4.200h-5.500l-1 .8"/><path d="M167 1034.200l0 1.800"/><path d="M174.500 1022.200l1.800 1.800-5.200 5.200-2.400.6.600-2.400z"/></g></svg>
<div class="a" style="left:1672px;top:1019px;width:38px;height:21px;background:#c6c6c6;"></div>
<svg style="left:1640px;top:1019px" width="240" height="21" viewBox="1640 1019 240 21"><g fill="none" stroke="#555" stroke-width="1">
<path d="M1646.500 1022.800h5.500l.8.800v9.600l-.8-.8h-5.500zM1659.100 1022.800h-5.500l-.8.800v9.600l.8-.8h5.500z"/><path d="M1648 1025.500h3.500M1648 1027.500h3.500M1648 1029.500h3.500M1654.300 1025.500h3.500M1654.300 1027.500h3.500M1654.300 1029.500h3.500M1652.800 1033v2"/>
<path d="M1684.500 1022.800h13v11.400h-13z" fill="#fff"/><path d="M1686 1025.500h10M1686 1027.500h10M1686 1029.500h10M1686 1031.500h10"/>
<path d="M1730 1034.200h-7.500v-11.400h12v5"/><path d="M1724 1025.500h9M1724 1027.500h9M1724 1029.500h4M1724 1031.500h4"/><circle cx="1732.500" cy="1031.800" r="3.200" fill="#fff" stroke="#444"/><path d="M1729.400 1031.800h6.200M1732.500 1028.600v6.400"/>
</g><path d="M1753.300 1028.300h5.800v1.600h-5.800z" fill="#555"/><path d="M1762.700 1029.500h100" stroke="#8a8a8a"/><rect x="1811.300" y="1022.700" width="4" height="11.600" fill="#666"/><path d="M1866.800 1028.300h6.600v1.600h-6.600zM1869.300 1025.800h1.600v6.600h-1.600z" fill="#555"/></svg>
<span class="t" style="left:1886.00px;top:1023.75px;font-size:11px;color:#444;transform:scaleX(0.9133);">100%</span>
<div class="a" style="left:0px;top:1040px;width:1920px;height:8px;background:#0c0d0a;background:linear-gradient(90deg,#14180a 0,#0b0c09 12%,#0a0a0a 50%,#10130c 58%,#0a0a0a 70%,#0a0a0a 100%);"></div>
<div class="a" style="left:980px;top:1040px;width:46px;height:8px;background:#2c2c2c;"></div>
<div class="a" style="left:1800px;top:1040px;width:80px;height:8px;overflow:hidden"><span class="t" style="left:18.50px;top:4.50px;font-size:12px;color:#fff;transform:scaleX(0.8991);">22:24</span></div>
</footer>
<main id="document">
<div class="a" style="left:525px;top:206px;width:1122px;height:793px;background:#fff;box-sizing:border-box;border:1px solid #c6c6c6;"></div>
<svg style="left:526px;top:207px" width="1120" height="791" viewBox="526 207 1120 791">
<defs>
<radialGradient id="rg" gradientUnits="userSpaceOnUse" cx="0" cy="0" r="560"><stop offset="0" stop-color="#f1f2f2" stop-opacity="0"/><stop offset="0.2" stop-color="#f1f2f2" stop-opacity="0.12"/><stop offset="0.4" stop-color="#f1f2f2" stop-opacity="0.4"/><stop offset="0.65" stop-color="#f1f2f2" stop-opacity="0.8"/><stop offset="0.85" stop-color="#f1f2f2" stop-opacity="1"/></radialGradient>
<clipPath id="cp"><rect x="605" y="243" width="962" height="719"/></clipPath>
<filter id="sp" x="0" y="0" width="1" height="1"><feTurbulence type="fractalNoise" baseFrequency="0.24" numOctaves="3" seed="11" result="n"/><feColorMatrix in="n" type="matrix" values="0 0 0 0 1  0 0 0 0 1  0 0 0 0 1  0 0 0 -11 4.15" result="m"/><feComposite in="m" in2="SourceGraphic" operator="in"/></filter>
</defs>
<g clip-path="url(#cp)"><g transform="translate(1089.5 587) skewX(0.564) scale(0.951 1)"><path d="M0 0L-152.6 -1291.0L152.6 -1291.0zM0 0L353.1 -1251.1L635.0 -1134.4zM0 0L805.0 -1020.8L1020.8 -805.0zM0 0L1134.4 -635.0L1251.1 -353.1zM0 0L1291.0 -152.6L1291.0 152.6zM0 0L1251.1 353.1L1134.4 635.0zM0 0L1020.8 805.0L805.0 1020.8zM0 0L635.0 1134.4L353.1 1251.1zM0 0L152.6 1291.0L-152.6 1291.0zM0 0L-353.1 1251.1L-635.0 1134.4zM0 0L-805.0 1020.8L-1020.8 805.0zM0 0L-1134.4 635.0L-1251.1 353.1zM0 0L-1291.0 152.6L-1291.0 -152.6zM0 0L-1251.1 -353.1L-1134.4 -635.0zM0 0L-1020.8 -805.0L-805.0 -1020.8zM0 0L-635.0 -1134.4L-353.1 -1251.1z" fill="url(#rg)"/></g></g>
<path d="M639.200 244H1532.500V277.100H1566.100V927.400H1532.500V961H639.200V927.400H605.900V277.100H639.200z" fill="none" stroke="#231f20" stroke-width="3.700"/>
<rect x="622.600" y="259.400" width="926.900" height="687.100" fill="none" stroke="#0469b3" stroke-width="8.800"/>
<g stroke="#a89c9c" stroke-width="1"><path d="M629 351.500H1544M629 420.500H1544M629 544.500H1544M902.500 753.500H1476M902.500 831.500H1476"/></g>
<path d="M669.500 360V412.500" stroke="#333" stroke-width="1"/>
<path d="M734.1 846.7L723.5 831.8L709.6 843.6L703.0 826.6L686.6 834.5L684.4 816.4L666.5 819.9L669.0 801.9L650.8 800.9L657.6 784.0L640.2 778.5L651.1 763.8L635.6 754.2L649.8 742.7L637.1 729.5L653.7 721.9L644.8 706.0L662.8 702.7L658.1 685.1L676.3 686.4L676.1 668.2L693.4 674.0L697.8 656.2L713.1 666.2L721.7 650.1L734.1 663.5L746.5 650.1L755.1 666.2L770.4 656.2L774.8 674.0L792.1 668.2L791.9 686.4L810.1 685.1L805.4 702.7L823.4 706.0L814.5 721.9L831.1 729.5L818.4 742.7L832.6 754.2L817.1 763.8L828.0 778.5L810.6 784.0L817.4 800.9L799.2 801.9L801.7 819.9L783.8 816.4L781.6 834.5L765.2 826.6L758.6 843.6L744.7 831.8z" fill="#0b6ab5"/>
<path d="M734.1 846.7L723.5 831.8L709.6 843.6L703.0 826.6L686.6 834.5L684.4 816.4L666.5 819.9L669.0 801.9L650.8 800.9L657.6 784.0L640.2 778.5L651.1 763.8L635.6 754.2L649.8 742.7L637.1 729.5L653.7 721.9L644.8 706.0L662.8 702.7L658.1 685.1L676.3 686.4L676.1 668.2L693.4 674.0L697.8 656.2L713.1 666.2L721.7 650.1L734.1 663.5L746.5 650.1L755.1 666.2L770.4 656.2L774.8 674.0L792.1 668.2L791.9 686.4L810.1 685.1L805.4 702.7L823.4 706.0L814.5 721.9L831.1 729.5L818.4 742.7L832.6 754.2L817.1 763.8L828.0 778.5L810.6 784.0L817.4 800.9L799.2 801.9L801.7 819.9L783.8 816.4L781.6 834.5L765.2 826.6L758.6 843.6L744.7 831.8z" fill="#fff" opacity="0.36" filter="url(#sp)"/>
<circle cx="733.900" cy="747.500" r="59.400" fill="#fff"/>
<g fill="none" stroke="#0b6ab5" stroke-linecap="round"><path d="M688.6 709.8L693.0 721.0L696.7 732.1L699.8 743.3L701.6 754.5L702.9 765.6L703.5 776.8L704.1 788.0L706.0 797.3" stroke-width="2"/><path d="M689.2 711.2Q686.6 712.8 683.7 711.0M689.2 711.2Q692.6 710.5 693.6 706.7M690.5 714.6Q687.5 716.3 684.3 714.3M690.5 714.6Q694.4 713.7 695.5 709.4M692.0 718.5Q688.7 720.5 685.1 718.2M692.0 718.5Q696.4 717.6 697.7 712.8M693.7 723.1Q690.0 725.1 686.2 722.3M693.7 723.1Q698.5 722.3 700.2 717.1M695.4 728.2Q691.4 730.4 687.3 727.4M695.4 728.2Q700.6 727.4 702.4 721.8M697.2 733.8Q692.9 735.9 688.7 732.5M697.2 733.8Q702.7 733.3 704.9 727.4M698.8 739.9Q694.4 742.0 690.0 738.5M698.8 739.9Q704.6 739.3 706.9 733.2M700.3 746.2Q695.5 747.8 691.4 743.8M700.3 746.2Q706.2 746.2 709.2 740.3M701.3 752.7Q696.5 754.4 692.4 750.3M701.3 752.7Q707.3 752.8 710.3 746.8M702.2 759.3Q697.3 760.7 693.4 756.5M702.2 759.3Q708.1 759.6 711.3 753.8M702.9 765.7Q698.1 766.8 694.6 762.5M702.9 765.7Q708.7 766.4 712.2 761.0M703.2 772.0Q698.6 773.0 695.2 768.9M703.2 772.0Q708.8 772.6 712.1 767.4M703.6 777.8Q699.2 778.8 696.0 774.9M703.6 777.8Q708.8 778.4 712.0 773.5M703.8 783.2Q699.7 784.2 696.8 780.5M703.8 783.2Q708.7 783.8 711.7 779.2M704.1 788.1Q700.5 789.5 697.4 786.6M704.1 788.1Q708.6 787.9 710.7 783.4M705.0 792.3Q701.8 793.5 698.9 790.9M705.0 792.3Q709.0 792.1 710.8 788.0M705.7 795.8Q702.9 796.9 700.4 794.6M705.7 795.8Q709.2 795.7 710.8 792.1" stroke-width="2.200"/><path d="M761.8 696.2L764.3 707.3L766.2 718.5L767.4 729.7L769.3 740.8L771.7 752.0L774.8 761.9L777.9 771.8L780.4 780.5L782.3 785.5" stroke-width="2"/><path d="M762.1 697.6Q759.0 698.8 756.2 696.4M762.1 697.6Q764.9 697.4 766.1 694.5M762.8 700.7Q759.3 702.1 756.1 699.3M762.8 700.7Q765.9 700.5 767.3 697.3M763.6 704.4Q759.8 706.0 756.3 702.9M763.6 704.4Q767.1 704.2 768.6 700.6M764.5 708.6Q760.2 710.1 756.6 706.5M764.5 708.6Q768.3 708.6 770.2 704.8M765.3 713.3Q760.7 714.9 756.8 711.0M765.3 713.3Q769.4 713.3 771.4 709.2M766.2 718.4Q761.3 720.1 757.1 716.0M766.2 718.4Q770.5 718.4 772.6 714.1M766.8 723.8Q761.6 725.3 757.5 720.8M766.8 723.8Q771.3 724.1 773.8 719.8M767.4 729.6Q762.0 731.1 757.8 726.5M767.4 729.6Q772.0 729.9 774.6 725.4M768.4 735.5Q763.0 737.4 758.5 732.9M768.4 735.5Q773.1 735.5 775.4 730.7M769.4 741.5Q764.1 743.6 759.4 739.3M769.4 741.5Q774.2 741.2 776.3 736.4M770.7 747.4Q765.4 749.5 760.7 745.2M770.7 747.4Q775.4 747.2 777.6 742.3M772.1 753.2Q767.1 755.7 762.1 752.0M772.1 753.2Q776.7 752.6 778.3 747.6M773.8 758.7Q769.0 761.2 764.1 757.5M773.8 758.7Q778.2 758.1 779.8 753.3M775.4 764.0Q770.8 766.3 766.2 762.9M775.4 764.0Q779.7 763.4 781.2 758.8M777.0 768.9Q772.6 771.1 768.2 767.9M777.0 768.9Q781.0 768.4 782.5 764.1M778.4 773.5Q774.3 775.4 770.3 772.3M778.4 773.5Q782.1 773.0 783.6 769.1M779.6 777.6Q775.8 779.4 772.1 776.5M779.6 777.6Q783.0 777.2 784.3 773.5M780.7 781.2Q777.4 783.1 773.9 780.8M780.7 781.2Q783.7 780.6 784.7 777.2M781.8 784.2Q778.9 785.9 775.8 783.8M781.8 784.2Q784.5 783.6 785.4 780.6" stroke-width="2.200"/></g>
</svg>
<span class="t" style="left:669.70px;top:365.35px;font-size:44.8px;color:#0469b3;font-weight:700;transform:scaleX(0.9068);-webkit-text-stroke:1.150px #0469b3;">NAJBARDZIEJ</span>
<span class="t" style="left:968.70px;top:365.35px;font-size:44.8px;color:#0469b3;font-weight:700;transform:scaleX(0.9279);-webkit-text-stroke:1.150px #0469b3;">INSPIRUJĄCY</span>
<span class="t" style="left:1264.75px;top:365.35px;font-size:44.8px;color:#0469b3;font-weight:700;transform:scaleX(0.9673);-webkit-text-stroke:1.150px #0469b3;">ZAWODNIK</span>
<span class="t" style="left:728.56px;top:493.00px;font-size:48px;color:#231f20;font-family:'Liberation Serif',serif;letter-spacing:0.048px;">[Imię i nazwisko osoby nagrodzonej]</span>
<span class="t" style="left:731.50px;top:561.60px;font-size:17.33px;color:#231f20;font-family:'Liberation Serif',serif;">otrzymuje nagrodę dla najbardziej inspirującego zawodnika sezonu za wyjątkowe występy w drużynie</span>
<span class="t" style="left:876.74px;top:599.00px;font-size:45.5px;color:#231f20;font-family:'Liberation Serif',serif;letter-spacing:-0.981px;">[NAZWA DRUŻYNY]</span>
<span class="t" style="left:902.00px;top:735.00px;font-size:17.33px;color:#231f20;font-family:'Liberation Serif',serif;letter-spacing:0.108px;">WRĘCZONY PRZEZ:</span>
<span class="t" style="left:948.50px;top:813.20px;font-size:17.33px;color:#231f20;font-family:'Liberation Serif',serif;letter-spacing:-0.055px;">W DNIU:</span>
<span class="t" style="left:1244.00px;top:728.40px;font-size:19px;color:#231f20;font-style:italic;transform:scaleX(1.0287);">[Podpisy]</span>
<span class="t" style="left:1169.70px;top:805.90px;font-size:19px;color:#231f20;font-style:italic;transform:scaleX(1.0904);">[Kliknij, aby wybrać datę]</span>
</main>
</body></html>
